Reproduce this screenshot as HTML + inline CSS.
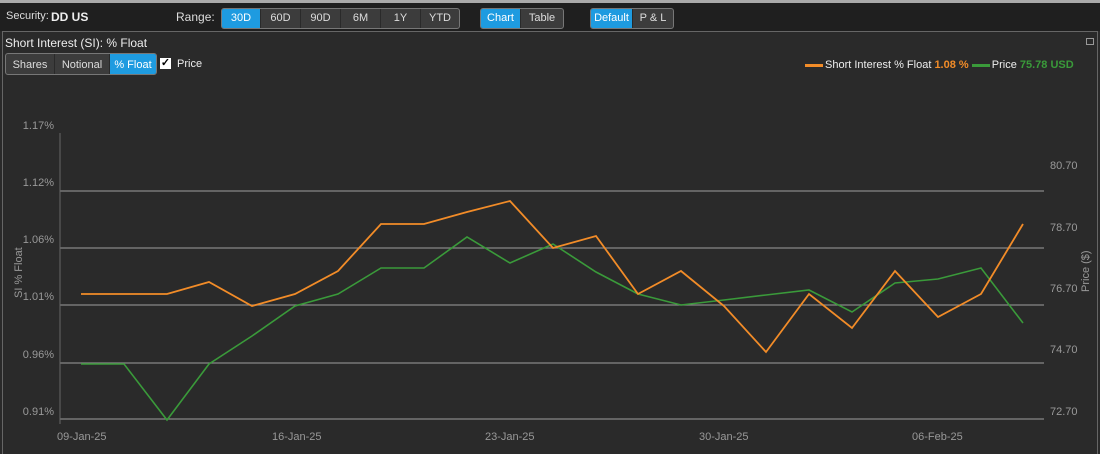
<!DOCTYPE html><html><head><style>
body{margin:0;width:1100px;height:453px;background:#2a2a2a;font-family:"Liberation Sans",sans-serif;color:#ddd;overflow:hidden;position:relative;font-size:12px}
.a{position:absolute}
.top{left:0;top:0;width:1100px;height:3px;background:#aaa}
.bar{left:0;top:3px;width:1100px;height:28px;background:#1f1f1f}
.grp{position:absolute;top:8px;height:19px;border:1px solid #777;border-radius:3px;display:flex;background:#3c3c3c;overflow:hidden}
.grp div{height:19px;line-height:19px;text-align:center;color:#ddd;border-right:1px solid #2a2a2a;font-size:11px}
.grp .on{background:#1e9be0;color:#fff}
</style></head><body>
<div class="a top"></div><div class="a bar"></div>
<div class="a" style="left:6px;top:10px;font-size:11px;color:#ddd">Security:</div>
<div class="a" style="left:51px;top:10px;font-size:12px;font-weight:bold;color:#eee">DD US</div>
<div class="a" style="left:176px;top:10px;color:#ddd">Range:</div>
<div class="grp" style="left:221px;width:237px"><div class="on" style="width:38px">30D</div><div style="width:39px">60D</div><div style="width:39px">90D</div><div style="width:39px">6M</div><div style="width:39px">1Y</div><div style="width:38px;border:0">YTD</div></div>
<div class="grp" style="left:480px;width:82px"><div class="on" style="width:39px">Chart</div><div style="width:42px;border:0">Table</div></div>
<div class="grp" style="left:590px;width:82px"><div class="on" style="width:41px">Default</div><div style="width:40px;border:0">P &amp; L</div></div>
<div class="a" style="left:2px;top:31px;width:1094px;height:422px;border:1px solid #666;border-bottom:0"></div>
<div class="a" style="left:5px;top:36px;color:#eee">Short Interest (SI): % Float</div>
<div class="a" style="left:1086px;top:38px;width:6px;height:5px;border:1px solid #999"></div>
<div class="grp" style="left:5px;top:53px;height:20px;width:150px"><div style="width:48px;height:20px;line-height:22px">Shares</div><div style="width:54px;height:20px;line-height:22px">Notional</div><div class="on" style="width:46px;height:20px;line-height:22px;border:0">% Float</div></div>
<div class="a" style="left:160px;top:58px;width:11px;height:11px;background:#fff;color:#000;font-size:11px;line-height:11px;text-align:center;font-weight:bold">✓</div>
<div class="a" style="left:177px;top:58px;color:#eee;font-size:11px">Price</div>
<div class="a" style="left:805px;top:59px;white-space:nowrap;color:#eee;font-size:11px"><span style="display:inline-block;width:18px;height:3px;background:#f28c28;vertical-align:middle;margin-right:2px"></span>Short Interest % Float <b style="color:#f28c28">1.08 %</b> <span style="display:inline-block;width:18px;height:3px;background:#3a9a3a;vertical-align:middle;margin-right:2px"></span>Price <b style="color:#3a9a3a">75.78 USD</b></div>
<svg class="a" style="left:0;top:0" width="1100" height="453">
<g stroke="#888" stroke-width="1.3"><line x1="60" y1="191" x2="1044" y2="191"/><line x1="60" y1="248" x2="1044" y2="248"/><line x1="60" y1="305" x2="1044" y2="305"/><line x1="60" y1="363" x2="1044" y2="363"/><line x1="60" y1="419" x2="1044" y2="419"/></g>
<line x1="60" y1="133" x2="60" y2="424" stroke="#666"/>
<g font-size="11" fill="#999" font-family="Liberation Sans"><text x="54" y="129" text-anchor="end">1.17%</text><text x="54" y="186" text-anchor="end">1.12%</text><text x="54" y="243" text-anchor="end">1.06%</text><text x="54" y="300" text-anchor="end">1.01%</text><text x="54" y="358" text-anchor="end">0.96%</text><text x="54" y="415" text-anchor="end">0.91%</text>
<text x="1050" y="169">80.70</text><text x="1050" y="231">78.70</text><text x="1050" y="292">76.70</text><text x="1050" y="353">74.70</text><text x="1050" y="415">72.70</text>
<text x="57" y="440">09-Jan-25</text><text x="272" y="440">16-Jan-25</text><text x="485" y="440">23-Jan-25</text><text x="699" y="440">30-Jan-25</text><text x="912" y="440">06-Feb-25</text>
<text transform="translate(22,298) rotate(-90)">SI % Float</text><text transform="translate(1089,292) rotate(-90)">Price ($)</text></g>
<polyline fill="none" stroke="#3a9a3a" stroke-width="1.6" points="81,364 124,364 167,420 209,364 252,336 295,306 338,294 381,268 424,268 467,237 510,263 553,244 596,272 638,294 681,305 724,300 766,295 809,290 852,312 895,283 938,279 981,268 1023,323"/>
<polyline fill="none" stroke="#f28c28" stroke-width="1.8" points="81,294 124,294 167,294 209,282 252,306 295,294 338,271 381,224 424,224 467,212 510,201 553,248 596,236 638,294 681,271 724,306 766,352 809,294 852,328 895,271 938,317 981,294 1023,224"/>
</svg>
</body></html>
